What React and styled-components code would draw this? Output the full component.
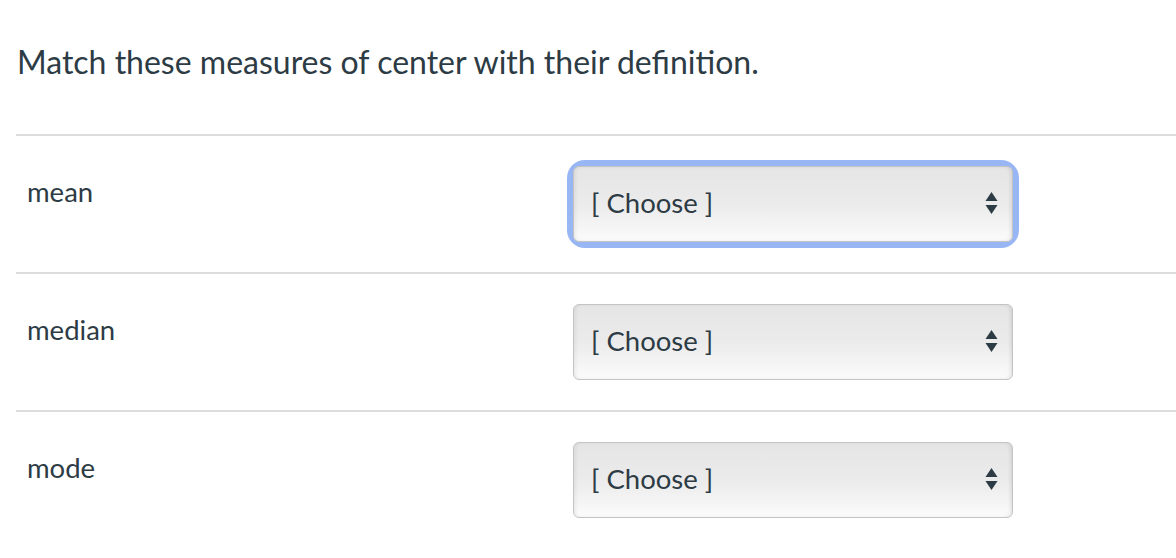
import styled, { createGlobalStyle } from "styled-components";

const GlobalStyle = createGlobalStyle`
  html, body {
    margin: 0;
    padding: 0;
    background: #fff;
  }
  body {
    font-family: Lato, "Open Sans", sans-serif;
    color: #2d3b45;
  }
`;

const Page = styled.div`
  padding: 0 0 0 16px;
`;

const Question = styled.h2`
  margin: 0;
  padding: 42px 0 0 1px;
  height: 134px;
  box-sizing: border-box;
  font-size: 32px;
  font-weight: 400;
  line-height: 40px;
  color: #2d3b45;
`;

const Row = styled.div`
  display: flex;
  align-items: flex-start;
  border-top: 2px solid #dcdcdc;
  padding: 30px 0 30px;
`;

const Label = styled.div`
  width: 546px;
  padding: 9px 0 0 11px;
  font-size: 27.5px;
  line-height: 34px;
  color: #2d3b45;
`;

const Ring = styled.div`
  border-radius: 12px;
  box-shadow: ${(p) => (p.focused ? "0 0 0 6px #98b5f4" : "none")};
`;

const SelectBox = styled.button`
  display: flex;
  align-items: center;
  justify-content: space-between;
  width: 440px;
  height: 76px;
  box-sizing: border-box;
  padding: 0 14px 3px 17px;
  border: 1px solid #c4c4c4;
  border-radius: 6px;
  background: linear-gradient(to bottom, #e5e5e5 0%, #ebebeb 50%, #fbfbfb 100%);
  box-shadow: inset 3px 0 4px -2px rgba(0, 0, 0, 0.08),
    inset -3px 0 4px -2px rgba(0, 0, 0, 0.12);
  font-family: Lato, "Open Sans", sans-serif;
  font-size: 27.5px;
  color: #2d3b45;
  cursor: pointer;
  outline: none;
`;

const Arrows = () => (
  <svg width="13" height="26" viewBox="0 0 13 26">
    <path d="M6.5 2 L12.5 11 L0.5 11 Z" fill="#2d3b45" />
    <path d="M0.5 15 L12.5 15 L6.5 24 Z" fill="#2d3b45" />
  </svg>
);

const items = [
  { term: "mean", focused: true },
  { term: "median", focused: false },
  { term: "mode", focused: false },
];

export default function App() {
  return (
    <Page>
      <GlobalStyle />
      <Question>Match these measures of center with their definition.</Question>
      {items.map((item) => (
        <Row key={item.term}>
          <Label>{item.term}</Label>
          <Ring focused={item.focused}>
            <SelectBox>
              <span>[ Choose ]</span>
              <Arrows />
            </SelectBox>
          </Ring>
        </Row>
      ))}
    </Page>
  );
}
